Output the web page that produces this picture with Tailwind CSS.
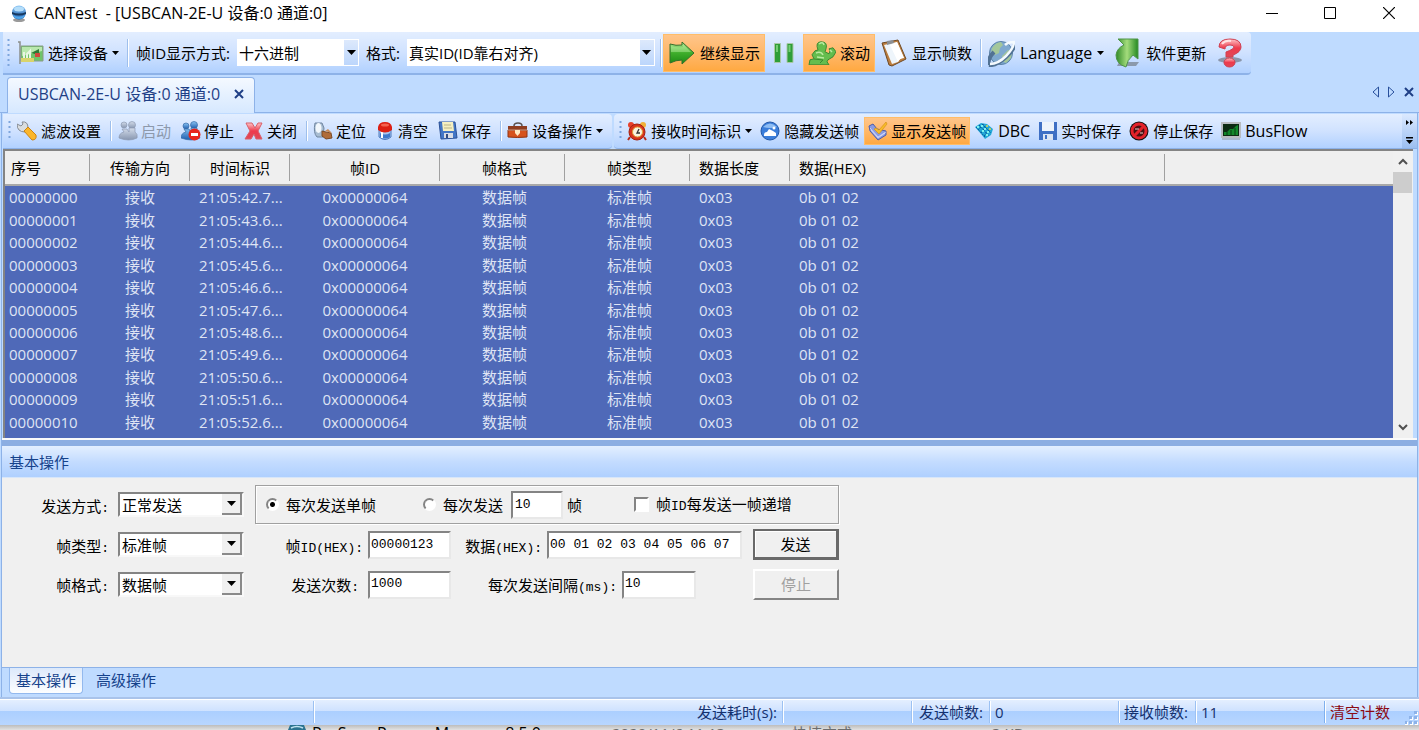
<!DOCTYPE html>
<html lang="zh-CN">
<head>
  <meta charset="UTF-8">
  <meta name="viewport" content="width=device-width, initial-scale=1">
  <title>CANTest</title>
  <script src="https://cdn.jsdelivr.net/npm/@tailwindcss/browser@4"></script>
</head>
<body class="min-h-screen flex flex-col bg-[#dcdcdc] font-['Open_Sans','Noto_Sans_CJK_SC',sans-serif] text-[15px] leading-5 text-black whitespace-nowrap overflow-x-hidden">

  <!-- Shared gradients -->
  <svg class="absolute w-0 h-0" aria-hidden="true">
    <defs>
      <linearGradient id="green" x1="0" y1="0" x2="0" y2="1"><stop offset="0" stop-color="#b6ee9a"/><stop offset=".5" stop-color="#3fae2c"/><stop offset="1" stop-color="#1c8a14"/></linearGradient>
      <linearGradient id="red" x1="0" y1="0" x2="0" y2="1"><stop offset="0" stop-color="#ffc4c8"/><stop offset=".5" stop-color="#ee3a4c"/><stop offset="1" stop-color="#e04858"/></linearGradient>
      <linearGradient id="blue" x1="0" y1="0" x2="0" y2="1"><stop offset="0" stop-color="#8cc6f4"/><stop offset="1" stop-color="#1c5cae"/></linearGradient>
      <linearGradient id="grey" x1="0" y1="0" x2="0" y2="1"><stop offset="0" stop-color="#d3dcea"/><stop offset="1" stop-color="#8796b0"/></linearGradient>
      <linearGradient id="leaf" x1="0" y1="0" x2="1" y2="0"><stop offset="0" stop-color="#2f8a28"/><stop offset=".5" stop-color="#a4dc7c"/><stop offset="1" stop-color="#258a22"/></linearGradient>
    </defs>
  </svg>

  <!-- Title bar -->
  <header class="flex items-center h-8 shrink-0 bg-white pl-[11px] pb-[6px]">
    <svg class="w-4 h-5" viewBox="0 0 16 20"><ellipse cx="8" cy="17" rx="6" ry="2" fill="#9a9a9a"/><circle cx="8" cy="9.500" r="7" fill="url(#blue)"/><path d="M1 9q7 3 14 0v2q-7 3-14 0z" fill="#17395f"/><path d="M2 12q6 3 12 0-1 4-6 4t-6-4z" fill="#4ea5ea"/><ellipse cx="8" cy="6" rx="5" ry="2.500" fill="#b5defa"/></svg>
    <h1 class="ml-[7px] text-base leading-5 whitespace-pre">CANTest  - [USBCAN-2E-U 设备:0 通道:0]</h1>
    <div class="ml-auto flex items-center">
      <button class="w-[58px] flex justify-center" aria-label="最小化"><svg class="w-3 h-3" viewBox="0 0 12 12"><path d="M0 6.500h12" stroke="#000"/></svg></button>
      <button class="w-[58px] flex justify-center" aria-label="最大化"><svg class="w-3 h-3" viewBox="0 0 12 12"><path d="M.5.500h11v11H.500z" fill="none" stroke="#000"/></svg></button>
      <button class="w-[60px] flex justify-center" aria-label="关闭窗口"><svg class="w-3 h-3" viewBox="0 0 12 12"><path d="M0 0l12 12M12 0L0 12" stroke="#000" stroke-width="1.200"/></svg></button>
    </div>
  </header>

  <main class="flex-1 flex flex-col bg-[#bfdbff]">
    <!-- Main toolbar -->
    <div class="flex h-[43px] shrink-0 pl-[3px]">
      <div class="flex items-center h-full pl-1 pr-1 rounded-r border-b-2 border-[#8db2e8] bg-linear-to-b from-[#e3eeff] via-[#d0e2ff] to-[#b1d1ff]">
        <svg class="w-1 h-7" viewBox="0 0 4 28"><path d="M1.500 0v28" stroke="#7ea6dd" stroke-width="2" stroke-dasharray="2 3"/></svg>
        <button class="flex items-center gap-1 pl-[6px] pr-1">
          <svg class="w-[27px] h-6" viewBox="0 0 27 24"><path d="M1 1h2v22" fill="none" stroke="#8c8f8c" stroke-width="1.500"/><path d="M4 5h22v15H4z" fill="#6fc46a" stroke="#8a9a86"/><path d="M5 6h20v4L5 15z" fill="#b9e8ae"/><path d="M4 17h13v4H4z" fill="#d9d46c"/><path d="M7 17v-6M10 17v-4l3-3v7" stroke="#e9f5e3" stroke-width="2" fill="none"/><path d="M14 12l8-4v6z" fill="#2d7a34"/><path d="M18 12h5v4h-5z" fill="#cf4a3c"/></svg>
          <span>选择设备</span>
          <svg class="w-[7px] h-1" viewBox="0 0 7 4"><path d="M0 0h7L3.500 4z"/></svg>
        </button>
        <i class="w-[2px] h-7 ml-1 border-l border-[#9ebfec] bg-white"></i>
        <label for="id-mode" class="ml-[7px] mr-[7px]">帧ID显示方式:</label>
        <div class="relative">
          <select id="id-mode" class="appearance-none block w-[122px] h-[27px] bg-white pl-[2px] outline-none"><option>十六进制</option><option>十进制</option></select>
          <span class="absolute right-px top-px w-[14px] h-[25px] flex items-center justify-center bg-linear-to-b from-[#dde9fc] to-[#bcd6fc] pointer-events-none"><svg class="w-[9px] h-[5px]" viewBox="0 0 9 5"><path d="M0 0h9L4.500 5z"/></svg></span>
        </div>
        <label for="id-format" class="mx-[7px]">格式:</label>
        <div class="relative">
          <select id="id-format" class="appearance-none block w-[248px] h-[27px] bg-white pl-[2px] outline-none"><option>真实ID(ID靠右对齐)</option></select>
          <span class="absolute right-px top-px w-[14px] h-[25px] flex items-center justify-center bg-linear-to-b from-[#dde9fc] to-[#bcd6fc] pointer-events-none"><svg class="w-[9px] h-[5px]" viewBox="0 0 9 5"><path d="M0 0h9L4.500 5z"/></svg></span>
        </div>
        <i class="w-[2px] h-7 ml-[5px] mr-px border-l border-[#9ebfec] bg-white"></i>
        <button class="flex items-center gap-1 h-[38px] px-1 border border-[#ffbd69] bg-linear-to-b from-[#ffc58a] to-[#ffa940]">
          <svg class="w-7 h-6" viewBox="0 0 28 24"><path d="M2 3q6 2 12 1V1l12 11-12 11v-4q-6 0-12 3z" fill="url(#green)" stroke="#356f2c"/><path d="M3 5q6 2 12 1V3.500l8 7.500H3z" fill="#b9f0a0" opacity=".45"/></svg>
          <span>继续显示</span>
        </button>
        <button class="px-[9px]" aria-label="暂停">
          <svg class="w-5 h-5" viewBox="0 0 20 20"><path d="M.5.500h6v19h-6zM13 .5h6v19h-6z" fill="#2f9e38" stroke="#a9c8a6"/><path d="M2 2h2v7H2zM14.500 2h2v7h-2z" fill="#74cc74"/></svg>
        </button>
        <button class="flex items-center gap-1 h-[38px] px-1 border border-[#ffbd69] bg-linear-to-b from-[#ffc58a] to-[#ffa940]">
          <svg class="w-7 h-6" viewBox="0 0 28 24"><path d="M10 9Q7 1 13 .8q7 0 5 7l-1 3 4 2 1-3-1-2 4-1 3 4-3 5-5 3-1 2 2 3H1l1-5 4-1-2-4 3-4z" fill="#64bd4e" stroke="#3b8a32"/><path d="M11 3q4-3 5 1M8 12q5-2 7 2M9 16l7 1M22 9l2 2" stroke="#b8eaa0" stroke-width="1.500" fill="none"/><path d="M6 18l9 1-3 3" stroke="#3b8a32" fill="none"/></svg>
          <span>滚动</span>
        </button>
        <button class="flex items-center gap-[5px] pl-[6px] pr-1">
          <svg class="w-[26px] h-7" viewBox="0 0 26 28"><path d="M1 4L17 1l8 19-14 7-3-1z" fill="#bb7d3f" stroke="#6f4a25"/><path d="M3 6l13-3 7 16q-5 0-6 4l-6 2z" fill="#eef5fb"/><path d="M16 3l7 16q-4 0-6 4L9 6z" fill="#fff"/><path d="M6 2l6-1 1 3-7 2z" fill="#8b8f94"/></svg>
          <span>显示帧数</span>
        </button>
        <i class="w-[2px] h-7 ml-1 mr-px border-l border-[#9ebfec] bg-white"></i>
        <button class="flex items-center gap-[5px] px-[5px]">
          <svg class="w-[27px] h-7" viewBox="0 0 27 28"><circle cx="13" cy="14" r="11.500" fill="#7fa9cf" stroke="#5b82a8"/><path d="M4 9q4-6 9-6l2 3-3 3-1 5-4 2-4-2zM14 17l6-6 4 2-1 6-5 5-4-2z" fill="#a4c79a"/><path d="M1 26Q-1 20 6 13M27 2q1 7-9 16T1 26" fill="none" stroke="#517294" stroke-width="4"/><path d="M2 25q8 0 16-8t8-14q-6 0-9 3" fill="none" stroke="#f4fafe" stroke-width="2.500"/></svg>
          <span class="text-base leading-5">Language</span>
          <svg class="w-[7px] h-1" viewBox="0 0 7 4"><path d="M0 0h7L3.500 4z"/></svg>
        </button>
        <button class="flex items-center gap-[6px] pl-[6px] pr-[5px]">
          <svg class="w-[25px] h-[30px]" viewBox="0 0 25 30"><path d="M4 24h20l-3 4H2z" fill="#8b99ab"/><path d="M3 1h20v20l-5-4q-6 5-7 12Q1 26 1 17 2 10 9 7z" fill="url(#leaf)" stroke="#4f9448"/></svg>
          <span>软件更新</span>
        </button>
        <button class="pl-[6px] pr-1" aria-label="帮助">
          <svg class="w-[26px] h-[30px]" viewBox="0 0 26 30"><ellipse cx="13" cy="22" rx="12" ry="3" fill="#8b96ab"/><path d="M2 9Q2 1 13 1t11 8q0 5-8 8v2H9v-5q8-3 8-5t-4-2q-5 0-5 4z" fill="url(#red)" stroke="#cf4051"/><ellipse cx="12.500" cy="24.500" rx="5.500" ry="4.500" fill="url(#red)" stroke="#cf4051"/><path d="M5 6q3-4 9-3" stroke="#ffe1e2" stroke-width="2" fill="none"/></svg>
        </button>
      </div>
    </div>

    <!-- Document tabs -->
    <div class="flex items-end h-[38px] shrink-0 pl-[7px] border-b border-[#8db2e8]">
      <div class="flex items-center w-[248px] h-9 pl-[10px] pb-1 -mb-px rounded-t border border-b-0 border-[#8db2e8] bg-linear-to-b from-[#f4f9ff] to-[#d6e8ff] text-[#1f3f86]">
        <a href="#" class="text-base leading-5">USBCAN-2E-U 设备:0 通道:0</a>
        <button class="ml-[14px]" aria-label="关闭标签"><svg class="w-[10px] h-[10px]" viewBox="0 0 10 10"><path d="M1 1l8 8M9 1L1 9" stroke="#1f3f86" stroke-width="2"/></svg></button>
      </div>
      <div class="ml-auto flex items-center gap-[9px] pr-[5px] mb-[14px]">
        <button aria-label="上一个"><svg class="w-[7px] h-3" viewBox="0 0 7 12"><path d="M6.500 1v10L1 6z" fill="none" stroke="#28509c"/></svg></button>
        <button aria-label="下一个"><svg class="w-[7px] h-3" viewBox="0 0 7 12"><path d="M.5 1v10L6 6z" fill="none" stroke="#28509c"/></svg></button>
        <button aria-label="关闭"><svg class="w-[10px] h-[10px]" viewBox="0 0 10 10"><path d="M1 1l8 8M9 1L1 9" stroke="#1f3f86" stroke-width="2"/></svg></button>
      </div>
    </div>

    <div class="flex-1 flex flex-col mx-px border-x border-[#8db2e8]">
      <!-- Channel toolbar -->
      <div class="flex h-9 shrink-0 pt-px pl-px">
        <div class="flex items-center pl-[5px] pr-1 rounded-r border-b border-[#8db2e8] bg-linear-to-b from-[#e3eeff] via-[#d0e2ff] to-[#b1d1ff]">
          <svg class="w-1 h-5" viewBox="0 0 4 20"><path d="M1.500 0v20" stroke="#7ea6dd" stroke-width="2" stroke-dasharray="2 3"/></svg>
          <button class="flex items-center gap-1 px-[5px]">
            <svg class="w-5 h-5" viewBox="0 0 20 20"><path d="M0 3l4 2 2-2-1-2q6-1 6 6l-3 4Q0 11 0 3z" fill="#d9dde0" stroke="#858b92"/><path d="M7 10l4-4 8 8q1 5-4 5z" fill="#fbb62b" stroke="#cc8414"/></svg>
            <span>滤波设置</span>
          </button>
          <i class="w-[2px] h-5 ml-1 mr-px border-l border-[#9ebfec] bg-white"></i>
          <button class="flex items-center gap-[3px] px-[5px] text-[#8d99ab]" disabled>
            <svg class="w-5 h-5" viewBox="0 0 20 20"><g fill="url(#grey)" stroke="#8c9ab2" stroke-width=".7"><circle cx="6" cy="4" r="3"/><circle cx="14" cy="4" r="3.500"/><path d="M1 17q0-5 5-6L4 8h5l2 3 0-4h6v4q3 2 2 6-8 4-18 0z"/></g></svg>
            <span>启动</span>
          </button>
          <button class="flex items-center gap-[3px] px-[5px]">
            <svg class="w-5 h-5" viewBox="0 0 20 20"><g fill="url(#blue)" stroke="#356aa8" stroke-width=".7"><circle cx="5" cy="5" r="3"/><circle cx="13" cy="4" r="3.500"/><path d="M0 17q0-5 5-6L3 8h5l2 3 0-4h6v4l3 6q-8 4-19 0z"/></g><circle cx="13.500" cy="13.500" r="6" fill="#e8241b"/><path d="M10 12h7v3h-7z" fill="#fff"/></svg>
            <span>停止</span>
          </button>
          <button class="flex items-center gap-[3px] px-[5px]">
            <svg class="w-5 h-5" viewBox="0 0 20 20"><path d="M2 2h6l3 5 3-5h4l-4 8 4 8h-6l-2-5-3 5H1l5-8z" fill="url(#red)" stroke="#d8606a"/></svg>
            <span>关闭</span>
          </button>
          <i class="w-[2px] h-5 ml-1 border-l border-[#9ebfec] bg-white"></i>
          <button class="flex items-center gap-[3px] px-[5px]">
            <svg class="w-5 h-5" viewBox="0 0 20 20"><path d="M2 2h7l2 5-1 9H4q-4-4-2-14z" fill="#a8bdd2" stroke="#7086a0"/><ellipse cx="5.500" cy="7" rx="3" ry="5" fill="#f2f7fb"/><path d="M9 10l4 1 5 1 1 5-6 1-4-3z" fill="#b06c39" stroke="#7a4a26"/><path d="M12 10l3-2 4 4" fill="#c98c5a"/></svg>
            <span>定位</span>
          </button>
          <button class="flex items-center gap-1 px-[5px]">
            <svg class="w-[18px] h-5" viewBox="0 0 18 20"><path d="M3 6h12v10q-6 5-12 0z" fill="#a9c6ef" stroke="#4b78bd"/><path d="M4 12q5 3 10 0v4q-5 3-10 0z" fill="#3e78cc"/><path d="M6 9v8" stroke="#fff" stroke-width="2"/><path d="M2 6q1-5 7-5t7 5v3q-7 5-14 0z" fill="#dc1f13"/><ellipse cx="9" cy="4" rx="4" ry="1.500" fill="#f4624f"/></svg>
            <span>清空</span>
          </button>
          <button class="flex items-center gap-[3px] px-[5px]">
            <svg class="w-5 h-5" viewBox="0 0 20 20"><path d="M1 1h16l2 16-16 1z" fill="#4276c6" stroke="#2b5196"/><path d="M4 1h11l1 9H5z" fill="#f6f0c0"/><path d="M6 4h7M6 7h8" stroke="#b9b489"/><path d="M6 12h9v5H6z" fill="#d8dde6"/><path d="M8 13h2v4H8z" fill="#324d82"/></svg>
            <span>保存</span>
          </button>
          <i class="w-[2px] h-5 ml-1 border-l border-[#9ebfec] bg-white"></i>
          <button class="flex items-center gap-1 px-[5px]">
            <svg class="w-[21px] h-5" viewBox="0 0 21 20"><path d="M7 5q0-3 4-3t4 3" fill="none" stroke="#59514f" stroke-width="1.500"/><path d="M1 5h19v6H1z" fill="#8f3d20"/><path d="M1 9h19v7q-9 1-19 0z" fill="#d6521d" stroke="#8f3414"/><path d="M1 9h19" stroke="#c9a08c"/><path d="M8 9h5v3l-2.500 3L8 12z" fill="#ffe9c4"/></svg>
            <span>设备操作</span>
            <svg class="w-[7px] h-1" viewBox="0 0 7 4"><path d="M0 0h7L3.500 4z"/></svg>
          </button>
        </div>
        <div class="flex items-center flex-1 ml-[2px] pl-[5px] rounded-l border-b border-[#8db2e8] bg-linear-to-b from-[#e3eeff] via-[#d0e2ff] to-[#b1d1ff]">
          <svg class="w-1 h-5" viewBox="0 0 4 20"><path d="M1.500 0v20" stroke="#7ea6dd" stroke-width="2" stroke-dasharray="2 3"/></svg>
          <button class="flex items-center gap-1 pl-1 pr-[5px]">
            <svg class="w-5 h-5" viewBox="0 0 20 20"><circle cx="4" cy="4" r="3" fill="#e6402b"/><circle cx="16" cy="4" r="3" fill="#f0b038"/><path d="M3 16l-2 3M17 16l2 3" stroke="#b92a18" stroke-width="2"/><circle cx="10" cy="11" r="8" fill="#d9331c" stroke="#a4200f"/><circle cx="10.500" cy="11" r="5" fill="#fbf3df" stroke="#e0a23a"/><path d="M12 8l-2 4h3" fill="none" stroke="#333" stroke-width="1.300"/></svg>
            <span>接收时间标识</span>
            <svg class="w-[7px] h-1" viewBox="0 0 7 4"><path d="M0 0h7L3.500 4z"/></svg>
          </button>
          <button class="flex items-center gap-1 pl-[3px] pr-[5px]">
            <svg class="w-5 h-5" viewBox="0 0 20 20"><circle cx="10" cy="10" r="9" fill="#3b7edb" stroke="#2358a8"/><path d="M3 6q7-7 14 0-7 2-14 0z" fill="#8ebdf3"/><path d="M4 14q0-3 3-3l2-3 4 2 3 2v3H4z" fill="#fff"/><circle cx="14" cy="7" r="1.500" fill="#fff"/></svg>
            <span>隐藏发送帧</span>
          </button>
          <button class="flex items-center gap-[3px] h-7 px-[3px] border border-[#ffbd69] bg-linear-to-b from-[#ffc58a] to-[#ffa940]">
            <svg class="w-5 h-5" viewBox="0 0 20 20"><path d="M1 5l4-2 4 5 9 2v4l-8 5-8-9z" fill="#8b9be0" stroke="#4c5cab"/><path d="M2 7l8 9 8-5M3 9l7 8 7-5" fill="none" stroke="#dfe5ff" stroke-width=".7"/><path d="M8 7l3 2 7-8 1 2-8 10-5-5z" fill="#f8bb29" stroke="#cf8d12" stroke-width=".6"/></svg>
            <span>显示发送帧</span>
          </button>
          <button class="flex items-center gap-1 pl-1 pr-1">
            <svg class="w-5 h-5" viewBox="0 0 20 20"><path d="M1 6l6-4 6 1 6 5-2 6-6 4-4-5z" fill="#23a9d8"/><path d="M2 6l9 10M5 4l10 11M8 3l9 9M4 9l6-6M7 12l6-8M10 15l7-8" stroke="#075b9c" stroke-dasharray="2 1"/><path d="M3 6h2M7 5h2M10 8h2M8 10h2M13 11h2M12 14h2" stroke="#7df3ee" stroke-width="2"/><path d="M12 5h2M15 8h2" stroke="#e6dc4c" stroke-width="1.500"/></svg>
            <span class="text-base leading-5">DBC</span>
          </button>
          <button class="flex items-center gap-[3px] px-1">
            <svg class="w-5 h-5" viewBox="0 0 20 20"><path d="M1 1h18v18H1z" fill="#3e6fc4"/><path d="M4 1h12v9H4z" fill="#edf3fb"/><path d="M5 13h10v6H5z" fill="#dbe4f2"/><path d="M7 14h2v4H7z" fill="#3e6fc4"/></svg>
            <span>实时保存</span>
          </button>
          <button class="flex items-center gap-1 px-1">
            <svg class="w-5 h-5" viewBox="0 0 20 20"><circle cx="10" cy="10" r="9.500" fill="#111"/><circle cx="10" cy="10" r="7" fill="#4a1010" stroke="#e3222a" stroke-width="3"/><path d="M5 15L15 5" stroke="#e3222a" stroke-width="3"/><path d="M6 8h4M11 12h3" stroke="#f7c9c9"/></svg>
            <span>停止保存</span>
          </button>
          <button class="flex items-center gap-1 px-1">
            <svg class="w-5 h-5" viewBox="0 0 20 20"><path d="M1 2h18v14H1z" fill="#0c2b12" stroke="#b8bcc0" stroke-width="2"/><path d="M1 18h18" stroke="#8f9499"/><path d="M3 14v-3l3 0 3-3 3 0 3-3 2-1v10z" fill="#12872a"/><path d="M6 14v-3M10 14V9M14 14V7" stroke="#063d12"/></svg>
            <span class="text-base leading-5">BusFlow</span>
          </button>
          <button class="flex flex-col items-center justify-between self-stretch ml-auto w-[15px] pt-[6px] pb-1 bg-linear-to-b from-[#dbe9ff] to-[#9cbff0]" aria-label="更多">
            <svg class="w-[9px] h-[5px]" viewBox="0 0 9 5"><path d="M1 0l3 2.500L1 5zM5 0l3 2.500L5 5z"/></svg>
            <svg class="w-[7px] h-[7px]" viewBox="0 0 7 7"><path d="M0 0h7v1.500H0zM0 3h7L3.500 7z"/></svg>
          </button>
        </div>
      </div>

      <!-- Frame list -->
      <div class="flex shrink-0 ml-px mr-1 border-t-2 border-l-2 border-[#848484] bg-[#4f69b8]">
        <div class="flex-1 min-w-0 pb-[5px] overflow-hidden">
          <table class="table-fixed w-full h-[282px] border-collapse text-[#dfe4f4]">
            <colgroup>
              <col class="w-[85px]"><col class="w-[100px]"><col class="w-[100px]"><col class="w-[150px]"><col class="w-[125px]"><col class="w-[125px]"><col class="w-[100px]"><col class="w-[375px]"><col>
            </colgroup>
            <thead>
              <tr class="h-[34px] bg-[#efefef] text-black border-b-2 border-[#a8a8a8]">
                <th class="font-normal text-left pl-[6px] bg-[linear-gradient(#a0a0a0,#a0a0a0)] bg-[length:1px_27px] bg-right bg-no-repeat">序号</th>
                <th class="font-normal bg-[linear-gradient(#a0a0a0,#a0a0a0)] bg-[length:1px_27px] bg-right bg-no-repeat">传输方向</th>
                <th class="font-normal bg-[linear-gradient(#a0a0a0,#a0a0a0)] bg-[length:1px_27px] bg-right bg-no-repeat">时间标识</th>
                <th class="font-normal bg-[linear-gradient(#a0a0a0,#a0a0a0)] bg-[length:1px_27px] bg-right bg-no-repeat">帧ID</th>
                <th class="font-normal pl-1 bg-[linear-gradient(#a0a0a0,#a0a0a0)] bg-[length:1px_27px] bg-right bg-no-repeat">帧格式</th>
                <th class="font-normal pl-1 bg-[linear-gradient(#a0a0a0,#a0a0a0)] bg-[length:1px_27px] bg-right bg-no-repeat">帧类型</th>
                <th class="font-normal text-left pl-[9px] bg-[linear-gradient(#a0a0a0,#a0a0a0)] bg-[length:1px_27px] bg-right bg-no-repeat">数据长度</th>
                <th class="font-normal text-left pl-[9px] bg-[linear-gradient(#a0a0a0,#a0a0a0)] bg-[length:1px_27px] bg-right bg-no-repeat">数据(HEX)</th>
                <th></th>
              </tr>
            </thead>
            <tbody id="frames"></tbody>
          </table>
        </div>
        <div class="flex flex-col w-5 bg-[#f0f0f0]">
          <button class="flex items-center justify-center h-[21px]" aria-label="向上滚动"><svg class="w-[10px] h-[7px]" viewBox="0 0 10 7"><path d="M1 6l4-4 4 4" fill="none" stroke="#505050" stroke-width="2"/></svg></button>
          <div class="h-[21px] mr-px bg-[#cdcdcd]"></div>
          <button class="flex items-center justify-center h-[21px] mt-auto" aria-label="向下滚动"><svg class="w-[10px] h-[7px]" viewBox="0 0 10 7"><path d="M1 1l4 4 4-4" fill="none" stroke="#505050" stroke-width="2"/></svg></button>
        </div>
      </div>
      <div class="h-2 shrink-0 border-t-2 border-[#fafafa] bg-[#8caee2]"></div>

      <!-- Send panel -->
      <h2 class="flex items-center h-8 shrink-0 pl-[7px] border-b border-[#d7e6fa] bg-linear-to-b from-[#e3efff] via-[#c4dcff] to-[#afd0ff] text-[#15428b]">基本操作</h2>
      <form class="flex-1 flex flex-col bg-[#f0f0f0] pt-[7px] font-['Noto_Sans_CJK_SC',sans-serif]">
        <div class="flex items-center h-[39px]">
          <label for="send-mode" class="w-[107px] pt-[6px] text-right">发送方式<span class="font-['Liberation_Mono',monospace] text-[13px]">:</span></label>
          <div class="relative ml-[9px]">
            <select id="send-mode" class="appearance-none block w-[126px] h-[25px] pl-[2px] bg-white border-2 border-[#848484] border-r-[#f8f8f8] border-b-[#f8f8f8] outline-none leading-5"><option>正常发送</option></select>
            <span class="absolute right-[2px] top-[2px] w-5 h-[21px] flex items-center justify-center bg-[#f0f0f0] border-r-2 border-b-2 border-[#8a8a8a] pointer-events-none"><svg class="w-[9px] h-[5px]" viewBox="0 0 9 5"><path d="M0 0h9L4.500 5z"/></svg></span>
          </div>
          <fieldset class="flex items-center w-[584px] h-[39px] ml-[11px] pl-[10px] border border-[#a0a0a0] shadow-[1px_1px_0_#fff,inset_1px_1px_0_#fff]">
            <input id="single" name="count-mode" type="radio" checked class="appearance-none w-[13px] h-[13px] rounded-full border-2 border-[#848484] border-r-white border-b-white bg-white checked:bg-[radial-gradient(circle,#000_2px,#fff_3px)]">
            <label for="single" class="ml-[7px] pt-px">每次发送单帧</label>
            <input id="multi" name="count-mode" type="radio" class="appearance-none w-[13px] h-[13px] ml-[47px] rounded-full border-2 border-[#848484] border-r-white border-b-white bg-white checked:bg-[radial-gradient(circle,#000_2px,#fff_3px)]">
            <label for="multi" class="ml-[7px] pt-px">每次发送</label>
            <input id="batch" type="text" value="10" aria-label="每次发送帧数" class="w-[52px] h-7 ml-2 pl-[2px] bg-white border-2 border-[#848484] border-r-[#e8e8e8] border-b-[#e8e8e8] outline-none font-['Liberation_Mono',monospace] text-[13px]">
            <label for="batch" class="ml-1">帧</label>
            <input id="auto-id" type="checkbox" class="appearance-none w-[15px] h-[15px] ml-[52px] border-2 border-[#848484] border-r-white border-b-white bg-white checked:bg-[radial-gradient(circle,#000_3px,#fff_4px)]">
            <label for="auto-id" class="ml-[7px] pt-px">帧<span class="font-['Liberation_Mono',monospace] text-[13px]">ID</span>每发送一帧递增</label>
          </fieldset>
        </div>
        <div class="flex items-center h-[31px] mt-[5px]">
          <label for="frame-type" class="w-[107px] pt-[6px] text-right">帧类型<span class="font-['Liberation_Mono',monospace] text-[13px]">:</span></label>
          <div class="relative ml-[9px]">
            <select id="frame-type" class="appearance-none block w-[126px] h-[25px] pl-[2px] bg-white border-2 border-[#848484] border-r-[#f8f8f8] border-b-[#f8f8f8] outline-none leading-5"><option>标准帧</option><option>扩展帧</option></select>
            <span class="absolute right-[2px] top-[2px] w-5 h-[21px] flex items-center justify-center bg-[#f0f0f0] border-r-2 border-b-2 border-[#8a8a8a] pointer-events-none"><svg class="w-[9px] h-[5px]" viewBox="0 0 9 5"><path d="M0 0h9L4.500 5z"/></svg></span>
          </div>
          <label for="frame-id" class="w-[119px] pt-[6px] text-right">帧<span class="font-['Liberation_Mono',monospace] text-[13px]">ID(HEX):</span></label>
          <input id="frame-id" type="text" value="00000123" class="w-[83px] h-7 ml-[5px] pl-px bg-white border-2 border-[#848484] border-r-[#e8e8e8] border-b-[#e8e8e8] outline-none font-['Liberation_Mono',monospace] text-[13px]">
          <label for="data" class="w-[91px] pt-[6px] text-right">数据<span class="font-['Liberation_Mono',monospace] text-[13px]">(HEX):</span></label>
          <input id="data" type="text" value="00 01 02 03 04 05 06 07" class="w-[195px] h-7 ml-[5px] pl-px bg-white border-2 border-[#848484] border-r-[#e8e8e8] border-b-[#e8e8e8] outline-none font-['Liberation_Mono',monospace] text-[13px]">
          <button type="button" class="w-[86px] h-[31px] ml-[11px] border-2 border-[#696969] border-b-[3px] border-r-[3px] bg-[#f0f0f0] shadow-[inset_1px_1px_0_#fff]">发送</button>
        </div>
        <div class="flex items-center h-[31px] mt-[9px]">
          <label for="frame-format" class="w-[107px] pt-1 text-right">帧格式<span class="font-['Liberation_Mono',monospace] text-[13px]">:</span></label>
          <div class="relative ml-[9px]">
            <select id="frame-format" class="appearance-none block w-[126px] h-[25px] pl-[2px] bg-white border-2 border-[#848484] border-r-[#f8f8f8] border-b-[#f8f8f8] outline-none leading-5"><option>数据帧</option><option>远程帧</option></select>
            <span class="absolute right-[2px] top-[2px] w-5 h-[21px] flex items-center justify-center bg-[#f0f0f0] border-r-2 border-b-2 border-[#8a8a8a] pointer-events-none"><svg class="w-[9px] h-[5px]" viewBox="0 0 9 5"><path d="M0 0h9L4.500 5z"/></svg></span>
          </div>
          <label for="times" class="w-[119px] pt-1 pr-1 text-right">发送次数<span class="font-['Liberation_Mono',monospace] text-[13px]">:</span></label>
          <input id="times" type="text" value="1000" class="w-[83px] h-7 ml-[5px] pl-px pb-[2px] bg-white border-2 border-[#848484] border-r-[#e8e8e8] border-b-[#e8e8e8] outline-none font-['Liberation_Mono',monospace] text-[13px]">
          <label for="interval" class="w-[166px] pt-1 text-right">每次发送间隔<span class="font-['Liberation_Mono',monospace] text-[13px]">(ms):</span></label>
          <input id="interval" type="text" value="10" class="w-[74px] h-7 ml-[5px] pl-px pb-[2px] bg-white border-2 border-[#848484] border-r-[#e8e8e8] border-b-[#e8e8e8] outline-none font-['Liberation_Mono',monospace] text-[13px]">
          <button type="button" disabled class="w-[86px] h-[31px] ml-[57px] pb-px border-2 border-white border-b-[#848484] border-r-[#848484] bg-[#f0f0f0] text-[#a0a0a0]">停止</button>
        </div>
      </form>

      <!-- Panel tabs -->
      <nav class="flex items-start h-[30px] shrink-0 pl-[7px] border-t border-[#8db2e8] text-[#15428b]">
        <a href="#" class="h-[26px] px-[6px] pt-[2px] rounded-b border border-t-0 border-[#93b9ee] bg-linear-to-b from-[#dce9fb] to-[#fdfeff]">基本操作</a>
        <a href="#" class="h-[26px] px-[13px] pt-[2px]">高级操作</a>
      </nav>
    </div>

    <!-- Status bar -->
    <footer class="flex items-center h-[28px] shrink-0 border-t-2 border-[#a9c3ea] shadow-[inset_0_1px_0_#fff] bg-[linear-gradient(#e6f0ff,#cfe2ff_45%,#abcfff_46%,#b8d6ff)] text-[#15316e] leading-[22px]">
      <div class="w-[315px] h-[22px] border-r border-white shadow-[inset_-1px_0_0_#9cc1f2]"></div>
      <div class="flex-1 h-[22px] pr-[6px] text-right border-r border-white shadow-[inset_-1px_0_0_#9cc1f2]">发送耗时(s):</div>
      <div class="w-[129px] h-[22px] border-r border-white shadow-[inset_-1px_0_0_#9cc1f2]"></div>
      <div class="w-[78px] h-[22px] pl-[6px] border-r border-white shadow-[inset_-1px_0_0_#9cc1f2]">发送帧数:</div>
      <div class="w-[129px] h-[22px] pl-1 border-r border-white shadow-[inset_-1px_0_0_#9cc1f2]">0</div>
      <div class="w-[77px] h-[22px] pl-1 border-r border-white shadow-[inset_-1px_0_0_#9cc1f2]">接收帧数:</div>
      <div class="w-[129px] h-[22px] pl-1 border-r border-white shadow-[inset_-1px_0_0_#7fb0ee]">11</div>
      <button class="h-[22px] pl-1 text-[#8b0a14]">清空计数</button>
      <svg class="w-[14px] h-[14px] ml-[15px] self-end" viewBox="0 0 14 14"><path d="M10 1h3v3h-3zM5 6h3v3H5zM10 6h3v3h-3zM0 11h3v3H0zM5 11h3v3H5zM10 11h3v3h-3z" fill="#fff"/><path d="M9 0h3v3H9zM4 5h3v3H4zM9 5h3v3H9zM-1 10h3v3h-3zM4 10h3v3H4zM9 10h3v3H9z" fill="#8db2e8"/></svg>
    </footer>
  </main>

  <!-- Window behind -->
  <div class="flex h-[5px] shrink-0 overflow-hidden pl-[287px] bg-linear-to-b from-[#bcbcbc] to-[#e2e2e2]">
    <svg class="w-5 h-5 shrink-0" viewBox="0 0 20 20"><path d="M3 0h14l2 5v15H1V5z" fill="#2b7390"/><path d="M4 3q6-3 12 0" stroke="#bfe3ee" stroke-width="1.500" fill="none"/></svg>
    <span class="w-[300px] ml-[5px] -mt-[2px] shrink-0 text-base leading-5">ProScan ProcessManager 8.5.0</span>
    <span class="w-[180px] -mt-[2px] shrink-0 text-[#6d6d6d]">2020/11/6 11:13</span>
    <span class="w-[200px] -mt-[2px] shrink-0 text-[#6d6d6d]">快捷方式</span>
    <span class="-mt-[2px] text-[#6d6d6d]">3 KB</span>
  </div>

  <script>
    const times = ['21:05:42.7', '21:05:43.6', '21:05:44.6', '21:05:45.6', '21:05:46.6', '21:05:47.6', '21:05:48.6', '21:05:49.6', '21:05:50.6', '21:05:51.6', '21:05:52.6'];
    document.getElementById('frames').innerHTML = times.map((time, i) => `
      <tr>
        <td class="pl-1">${String(i).padStart(8, '0')}</td>
        <td class="text-center">接收</td>
        <td class="pl-[9px]">${time}...</td>
        <td class="text-center">0x00000064</td>
        <td class="pl-1 text-center">数据帧</td>
        <td class="pl-1 text-center">标准帧</td>
        <td class="pl-[9px]">0x03</td>
        <td class="pl-[9px]">0b 01 02</td>
        <td></td>
      </tr>`).join('');
  </script>
</body>
</html>
